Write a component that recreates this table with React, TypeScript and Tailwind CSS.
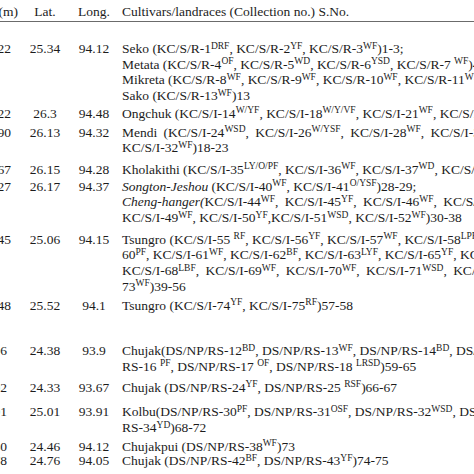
import React from "react";

type Row = {
  alt: string;
  altPad: string;
  lat: string;
  long: string;
  mt: string;
  lines: { text: string; wide?: boolean }[];
};

const rows: Row[] = [
  {
    alt: "1222",
    altPad: "pr-[7px]",
    lat: "25.34",
    long: "94.12",
    mt: "mt-[19px]",
    lines: [
      { text: "Seko (KC/S/R-1^{DRF}, KC/S/R-2^{YF}, KC/S/R-3^{WF})1-3;" },
      { text: "Metata (KC/S/R-4^{OF}, KC/S/R-5^{WD}, KC/S/R-6^{YSD}, KC/S/R-7 ^{WF})4-7;" },
      { text: "Mikreta (KC/S/R-8^{WF}, KC/S/R-9^{WF}, KC/S/R-10^{WF}, KC/S/R-11^{WF}, KC/S/R-12^{WF})8-12;" },
      { text: "Sako (KC/S/R-13^{WF})13" },
    ],
  },
  {
    alt: "1222",
    altPad: "pr-[7px]",
    lat: "26.3",
    long: "94.48",
    mt: "mt-[2px]",
    lines: [{ text: "Ongchuk (KC/S/I-14^{W/YF}, KC/S/I-18^{W/Y/VF}, KC/S/I-21^{WF}, KC/S/I-22^{WF})14-17" }],
  },
  {
    alt: "1090",
    altPad: "pr-[7px]",
    lat: "26.13",
    long: "94.32",
    mt: "mt-[3px]",
    lines: [
      { text: "Mendi (KC/S/I-24^{WSD}, KC/S/I-26^{W/YSF}, KC/S/I-28^{WF}, KC/S/I-30^{WF}, KC/S/I-31^{WF}", wide: true },
      { text: "KC/S/I-32^{WF})18-23" },
    ],
  },
  {
    alt: "1167",
    altPad: "pr-[7px]",
    lat: "26.15",
    long: "94.28",
    mt: "mt-[6px]",
    lines: [{ text: "Kholakithi (KC/S/I-35^{LY/O/PF}, KC/S/I-36^{WF}, KC/S/I-37^{WD}, KC/S/I-38^{WF})24-27" }],
  },
  {
    alt: "1227",
    altPad: "pr-[7px]",
    lat: "26.17",
    long: "94.37",
    mt: "mt-[1px]",
    lines: [
      { text: "_{Songton-Jeshou} (KC/S/I-40^{WF}, KC/S/I-41^{O/YSF})28-29;" },
      { text: "_{Cheng-hanger(}KC/S/I-44^{WF}, KC/S/I-45^{YF}, KC/S/I-46^{WF}, KC/S/I-47^{WF}, KC/S/I-48^{YF},", wide: true },
      { text: "KC/S/I-49^{WF}, KC/S/I-50^{YF},KC/S/I-51^{WSD}, KC/S/I-52^{WF})30-38" },
    ],
  },
  {
    alt: "1045",
    altPad: "pr-[7px]",
    lat: "25.06",
    long: "94.15",
    mt: "mt-[6px]",
    lines: [
      { text: "Tsungro (KC/S/I-55 ^{RF}, KC/S/I-56^{YF}, KC/S/I-57^{WF}, KC/S/I-58^{LPF}, KC/S/I-" },
      { text: "60^{PF}, KC/S/I-61^{WF}, KC/S/I-62^{BF}, KC/S/I-63^{LYF}, KC/S/I-65^{YF}, KC/S/I-66^{WF}," },
      { text: "KC/S/I-68^{LBF}, KC/S/I-69^{WF}, KC/S/I-70^{WF}, KC/S/I-71^{WSD}, KC/S/I-72^{WF}, KC/S/I-", wide: true },
      { text: "73^{WF})39-56" },
    ],
  },
  {
    alt: "1048",
    altPad: "pr-[7px]",
    lat: "25.52",
    long: "94.1",
    mt: "mt-[3px]",
    lines: [{ text: "Tsungro (KC/S/I-74^{YF}, KC/S/I-75^{RF})57-58" }],
  },
  {
    alt: "906",
    altPad: "pr-[11px]",
    lat: "24.38",
    long: "93.9",
    mt: "mt-[30px]",
    lines: [
      { text: "Chujak(DS/NP/RS-12^{BD}, DS/NP/RS-13^{WF}, DS/NP/RS-14^{BD}, DS/NP/RS-15^{WF}, DS/NP/" },
      { text: "RS-16 ^{PF}, DS/NP/RS-17 ^{OF}, DS/NP/RS-18 ^{LRSD})59-65" },
    ],
  },
  {
    alt: "992",
    altPad: "pr-[11px]",
    lat: "24.33",
    long: "93.67",
    mt: "mt-[5px]",
    lines: [{ text: "Chujak (DS/NP/RS-24^{YF}, DS/NP/RS-25 ^{RSF})66-67" }],
  },
  {
    alt: "901",
    altPad: "pr-[11px]",
    lat: "25.01",
    long: "93.91",
    mt: "mt-[9px]",
    lines: [
      { text: "Kolbu(DS/NP/RS-30^{PF}, DS/NP/RS-31^{OSF}, DS/NP/RS-32^{WSD}, DS/NP/RS-33^{WF}, DS/NP/" },
      { text: "RS-34^{YD})68-72" },
    ],
  },
  {
    alt: "880",
    altPad: "pr-[11px]",
    lat: "24.46",
    long: "94.12",
    mt: "mt-[3px]",
    lines: [{ text: "Chujakpui (DS/NP/RS-38^{WF})73" }],
  },
  {
    alt: "878",
    altPad: "pr-[11px]",
    lat: "24.76",
    long: "94.05",
    mt: "mt-[-1px]",
    lines: [{ text: "Chujak (DS/NP/RS-42^{BF}, DS/NP/RS-43^{YF})74-75" }],
  },
];

// "^{..}" is a superscript, "_{..}" is italic
function Rich({ text }: { text: string }) {
  const parts = text.split(/(\^\{[^}]*\}|_\{[^}]*\})/);
  return (
    <>
      {parts.map((p, i) => {
        if (p.startsWith("^{")) {
          return (
            <span key={i} className="relative -top-[4.5px] text-[9.5px] leading-none">
              {p.slice(2, -1)}
            </span>
          );
        }
        if (p.startsWith("_{")) {
          return (
            <i key={i} className="italic">
              {p.slice(2, -1)}
            </i>
          );
        }
        return <React.Fragment key={i}>{p}</React.Fragment>;
      })}
    </>
  );
}

export default function App() {
  return (
    <div
      className="w-[474px] h-[474px] overflow-hidden bg-white text-[#1c1c1c] text-[13.5px] leading-[15.7px]"
      style={{ fontFamily: '"Liberation Serif", "Times New Roman", serif' }}
    >
      {/* header */}
      <div className="flex h-[22px] pt-[4px] border-b-[1.5px] border-[#6b6b6b] whitespace-nowrap">
        <div className="w-[18px] flex justify-end">Altitude (m)</div>
        <div className="w-[54px] flex justify-center">Lat.</div>
        <div className="w-[44px] flex justify-center">Long.</div>
        <div className="pl-[6px]">Cultivars/landraces (Collection no.) S.No.</div>
      </div>

      {rows.map((r, i) => (
        <div key={i} className={`flex whitespace-nowrap ${r.mt}`}>
          <div className={`w-[18px] shrink-0 flex justify-end ${r.altPad}`}>{r.alt}</div>
          <div className="w-[54px] shrink-0 flex justify-center">{r.lat}</div>
          <div className="w-[44px] shrink-0 flex justify-center">{r.long}</div>
          <div className="pl-[6px] flex flex-col">
            {r.lines.map((l, j) => (
              <div key={j} className={l.wide ? "[word-spacing:3px]" : ""}>
                <Rich text={l.text} />
              </div>
            ))}
          </div>
        </div>
      ))}
    </div>
  );
}
